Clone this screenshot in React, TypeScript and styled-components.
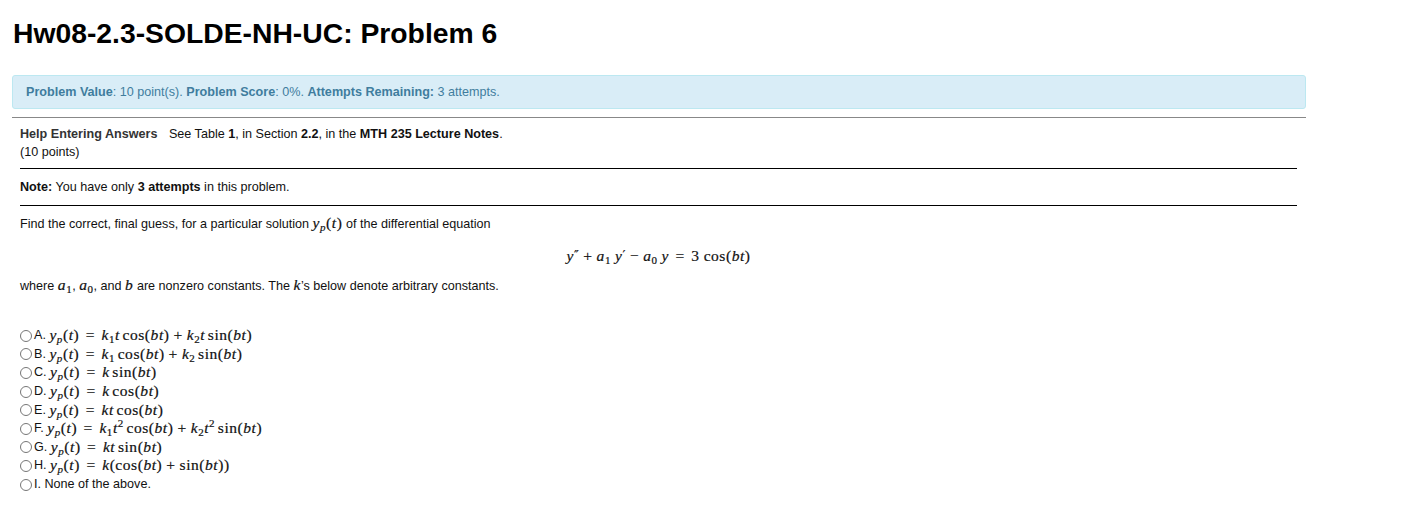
import React from "react";
import styled, { createGlobalStyle } from "styled-components";

const Global = createGlobalStyle`
  html, body { margin: 0; padding: 0; background: #fff; }
  body { font-family: "Liberation Sans", Arial, sans-serif; font-size: 12.6px; color: #111; }
`;

const Page = styled.div`
  width: 1294px;
  padding: 0 0 0 12px;
`;
const Title = styled.h1`
  margin: 0;
  padding: 17px 0 0 1px;
  height: 75px;
  box-sizing: border-box;
  font-size: 28.3px;
  line-height: 33px;
  font-weight: 700;
  color: #000;
`;
const Alert = styled.div`
  box-sizing: border-box;
  height: 34px;
  background: #d9edf7;
  border: 1px solid #bce8f1;
  border-radius: 3px;
  padding: 0 13px;
  color: #3f7d9e;
  line-height: 32px;
`;
const Rule = styled.hr`
  margin: 8px 0 0;
  border: 0;
  border-top: 1px solid #888;
`;
const Body = styled.div`
  padding: 0 9px 0 8px;
`;
const HelpBlock = styled.div`
  padding-top: 7px;
  height: 43px;
  line-height: 18px;
`;
const HelpLabel = styled.b`
  color: #333;
  margin-right: 8px;
`;
const Divider = styled.hr`
  margin: 0;
  border: 0;
  border-top: 1px solid #000;
`;
const NoteBlock = styled.div`
  height: 36px;
  line-height: 37px;
`;
const Para = styled.div<{ $h: number; $lh: number }>`
  height: ${(p) => p.$h}px;
  line-height: ${(p) => p.$lh}px;
`;
const Display = styled.div`
  height: 37px;
  display: flex;
  align-items: center;
  justify-content: center;
`;
const Choices = styled.div`
  padding-top: 32px;
  display: flex;
  flex-direction: column;
`;
const Choice = styled.label`
  display: flex;
  align-items: center;
  height: 18.6px;
  white-space: pre;
`;
const Radio = styled.input`
  width: 12px;
  height: 12px;
  margin: 1px 2px 0 0;
  flex: none;
`;
const M = styled.span`
  font-family: "Liberation Serif", "Times New Roman", serif;
  font-size: 15.5px;
  letter-spacing: 0.55px;
  color: #111;
  white-space: pre;
  -webkit-text-stroke: 0.2px #111;
`;
const Gap = styled.span<{ $w: number }>`
  display: inline-block;
  width: ${(p) => p.$w}px;
`;
const I = styled.i``;
const Sub = styled.sub`
  font-size: 11px;
  line-height: 0;
  vertical-align: -3px;
`;
const Sup = styled.sup`
  font-size: 11px;
  line-height: 0;
  vertical-align: 6px;
`;
const Prime = styled.span`
  font-family: "DejaVu Sans", sans-serif;
  font-size: 13px;
  line-height: 0;
  vertical-align: 2px;
`;

const Yp = () => (
  <>
    <I>y</I>
    <Sub><I>p</I></Sub>(<I>t</I>)
  </>
);
const Rel = ({ c }: { c: string }) => (
  <>
    <Gap $w={6.5} />{c}<Gap $w={6.5} />
  </>
);
const Bin = ({ c }: { c: string }) => (
  <>
    <Gap $w={4} />{c}<Gap $w={4} />
  </>
);
const K = ({ n }: { n?: string }) => (
  <>
    <I>k</I>
    {n && <Sub>{n}</Sub>}
  </>
);
const BT = () => (
  <>
    (<I>bt</I>)
  </>
);
const Fn = ({ f }: { f: string }) => (
  <>
    <Gap $w={2.7} />{f}
    <BT />
  </>
);

const options: [string, React.ReactNode][] = [
  ["A.", <><K n="1" /><I>t</I><Fn f="cos" /><Bin c="+" /><K n="2" /><I>t</I><Fn f="sin" /></>],
  ["B.", <><K n="1" /><Fn f="cos" /><Bin c="+" /><K n="2" /><Fn f="sin" /></>],
  ["C.", <><K /><Fn f="sin" /></>],
  ["D.", <><K /><Fn f="cos" /></>],
  ["E.", <><K /><I>t</I><Fn f="cos" /></>],
  ["F.", <><K n="1" /><I>t</I><Sup>2</Sup><Fn f="cos" /><Bin c="+" /><K n="2" /><I>t</I><Sup>2</Sup><Fn f="sin" /></>],
  ["G.", <><K /><I>t</I><Fn f="sin" /></>],
  ["H.", <><K />(cos<BT /><Bin c="+" />sin<BT />)</>],
];

export default function App() {
  return (
    <Page>
      <Global />
      <Title>Hw08-2.3-SOLDE-NH-UC: Problem 6</Title>
      <Alert>
        <b>Problem Value</b>: 10 point(s). <b>Problem Score</b>: 0%. <b>Attempts Remaining:</b> 3 attempts.
      </Alert>
      <Rule />
      <Body>
        <HelpBlock>
          <HelpLabel>Help Entering Answers</HelpLabel> See Table <b>1</b>, in Section <b>2.2</b>, in the <b>MTH 235 Lecture Notes</b>.
          <br />
          (10 points)
        </HelpBlock>
        <Divider />
        <NoteBlock>
          <b>Note:</b> You have only <b>3 attempts</b> in this problem.
        </NoteBlock>
        <Divider />
        <Para $h={31} $lh={33}>
          Find the correct, final guess, for a particular solution <M><Yp /></M> of the differential equation
        </Para>
        <Display>
          <M>
            <I>y</I><Prime>″</Prime><Bin c="+" /><I>a</I><Sub>1</Sub><Gap $w={4} /><I>y</I><Prime>′</Prime><Bin c="−" /><I>a</I><Sub>0</Sub><Gap $w={4} /><I>y</I><Rel c="=" />3<Gap $w={4} />cos<BT />
          </M>
        </Display>
        <Para $h={20} $lh={22}>
          where <M><I>a</I><Sub>1</Sub></M>, <M><I>a</I><Sub>0</Sub></M>, and <M><I>b</I></M> are nonzero constants. The <M><I>k</I></M>’s below denote arbitrary constants.
        </Para>
        <Choices>
          {options.map(([l, m]) => (
            <Choice key={l}>
              <Radio type="radio" name="c" />
              {l} <M><Yp /><Rel c="=" />{m}</M>
            </Choice>
          ))}
          <Choice>
            <Radio type="radio" name="c" />
            I. None of the above.
          </Choice>
        </Choices>
      </Body>
    </Page>
  );
}
